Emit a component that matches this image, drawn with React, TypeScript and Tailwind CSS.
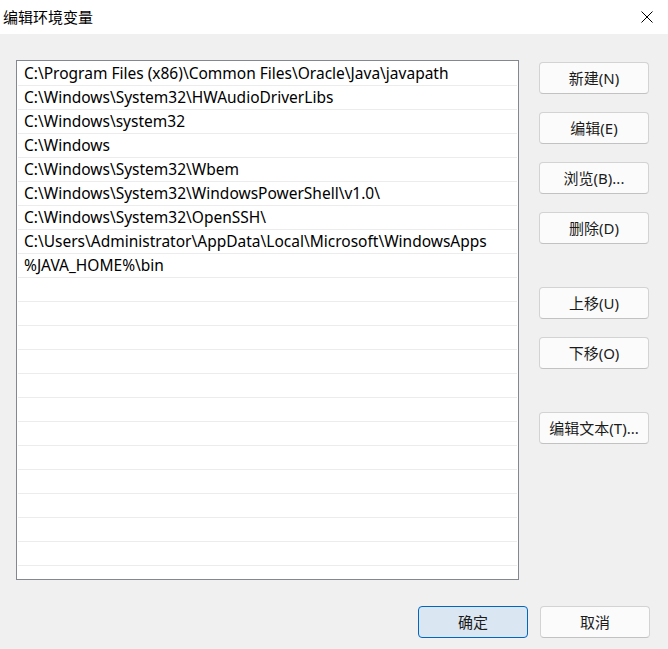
import React from 'react';

const paths = [
  'C:\\Program Files (x86)\\Common Files\\Oracle\\Java\\javapath',
  'C:\\Windows\\System32\\HWAudioDriverLibs',
  'C:\\Windows\\system32',
  'C:\\Windows',
  'C:\\Windows\\System32\\Wbem',
  'C:\\Windows\\System32\\WindowsPowerShell\\v1.0\\',
  'C:\\Windows\\System32\\OpenSSH\\',
  'C:\\Users\\Administrator\\AppData\\Local\\Microsoft\\WindowsApps',
  '%JAVA_HOME%\\bin',
];

const font = "font-['Noto_Sans','Noto_Sans_CJK_SC',sans-serif]";

function Btn({ label, primary }: { label: string; primary?: boolean }) {
  return (
    <button
      className={`w-[110px] h-[32px] shrink-0 rounded-[4px] border text-[15px] text-[#1b1b1b] ${
        primary
          ? 'bg-[#dae6f2] border-[#0067c0]'
          : 'bg-[#fbfbfb] border-[#d3d3d3] border-b-[#c2c2c2]'
      }`}
    >
      {label}
    </button>
  );
}

export default function App() {
  const rows = [...paths, ...Array(22 - paths.length).fill('')];

  return (
    <div className={`w-[668px] h-[649px] bg-[#f0f0f0] flex flex-col ${font}`}>
      {/* title bar */}
      <div className="h-[34px] bg-white flex items-center justify-between pl-[3px] pr-[15px]">
        <span className="text-[15px] text-black">编辑环境变量</span>
        <svg width="12" height="12" viewBox="0 0 12 12" className="text-black">
          <path d="M0.5 0.5 L11.5 11.5 M11.5 0.5 L0.5 11.5" stroke="currentColor" strokeWidth="1" fill="none" />
        </svg>
      </div>

      <div className="flex pt-[26px] pl-[16px]">
        {/* list */}
        <div className="w-[503px] h-[520px] bg-white border border-[#828790] p-px overflow-hidden">
          {rows.map((p, i) => (
            <div
              key={i}
              className="h-[24px] border-b border-[#ececec] flex items-center pl-[6px] text-[15.5px] text-black whitespace-nowrap"
            >
              {p}
            </div>
          ))}
        </div>

        {/* side buttons */}
        <div className="flex flex-col ml-[20px] pt-[2px]">
          <div className="flex flex-col gap-[18px]">
            <Btn label="新建(N)" />
            <Btn label="编辑(E)" />
            <Btn label="浏览(B)..." />
            <Btn label="删除(D)" />
          </div>
          <div className="flex flex-col gap-[18px] mt-[43px]">
            <Btn label="上移(U)" />
            <Btn label="下移(O)" />
          </div>
          <div className="mt-[43px]">
            <Btn label="编辑文本(T)..." />
          </div>
        </div>
      </div>

      {/* footer */}
      <div className="flex justify-end gap-[12px] pr-[18px] mt-[26px]">
        <Btn label="确定" primary />
        <Btn label="取消" />
      </div>
    </div>
  );
}
